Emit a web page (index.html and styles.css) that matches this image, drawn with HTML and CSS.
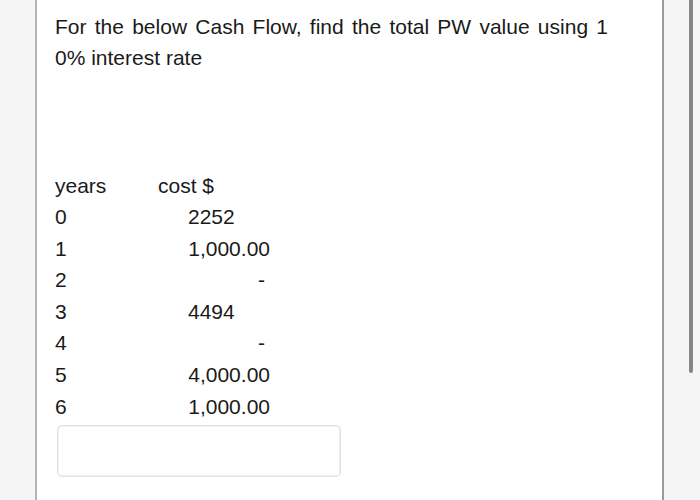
FILE: index.html
```html
<!DOCTYPE html>
<html>
<head>
<meta charset="utf-8">
<link rel="stylesheet" href="styles.css">
</head>
<body>
<div class="page">
  <div class="gutter"></div>
  <main class="panel">
    <p class="question">For the below Cash Flow, find the total PW value using 1 0% interest rate</p>
    <div class="cashflow">
      <div class="row head"><span class="yr">years</span><span class="cost">cost $</span></div>
      <div class="row"><span class="yr">0</span><span class="val left">2252</span></div>
      <div class="row"><span class="yr">1</span><span class="val">1,000.00</span></div>
      <div class="row"><span class="yr">2</span><span class="val dash">-</span></div>
      <div class="row"><span class="yr">3</span><span class="val left">4494</span></div>
      <div class="row"><span class="yr">4</span><span class="val dash">-</span></div>
      <div class="row"><span class="yr">5</span><span class="val">4,000.00</span></div>
      <div class="row"><span class="yr">6</span><span class="val">1,000.00</span></div>
    </div>
    <div class="answer"></div>
  </main>
  <div class="side"><div class="scrollbar"></div></div>
</div>
</body>
</html>
```

FILE: styles.css
```css
html, body {
  margin: 0;
  padding: 0;
  height: 100%;
  background: #f5f5f5;
  font-family: "Liberation Sans", Arial, sans-serif;
  color: #1a1a1a;
}
.page {
  display: flex;
  height: 500px;
  overflow: hidden;
}
.gutter {
  width: 35px;
  flex: none;
}
.panel {
  width: 607px;
  flex: none;
  background: #ffffff;
  border-left: 2px solid #b4b4b4;
  border-right: 2px solid #9a9a9a;
  padding: 0 0 0 18px;
  box-sizing: content-box;
}
.question {
  margin: 11px 0 0 0;
  width: 553px;
  font-size: 21px;
  line-height: 31px;
  text-align: justify;
}
.cashflow {
  margin-top: 98px;
  font-size: 21px;
}
.row {
  display: flex;
  height: 31.6px;
  line-height: 31.6px;
}
.head {
  height: 30px;
  line-height: 30px;
}
.yr {
  width: 103px;
  flex: none;
}
.cost {
  flex: none;
}
.val {
  margin-left: 30px;
  width: 82px;
  text-align: right;
}
.val.left {
  text-align: left;
}
.val.dash {
  padding-right: 5px;
  width: 77px;
}
.answer {
  margin: 3px 0 0 2px;
  width: 282px;
  height: 50px;
  border: 1px solid #e0e0e0;
  border-radius: 5px;
  box-shadow: inset 0 0 0 1px #f0f0f0;
}
.side {
  flex: 1;
  position: relative;
}
.scrollbar {
  position: absolute;
  left: 25px;
  top: 0;
  width: 4px;
  height: 373px;
  background: #858585;
  border-radius: 0 0 2px 2px;
}
```
